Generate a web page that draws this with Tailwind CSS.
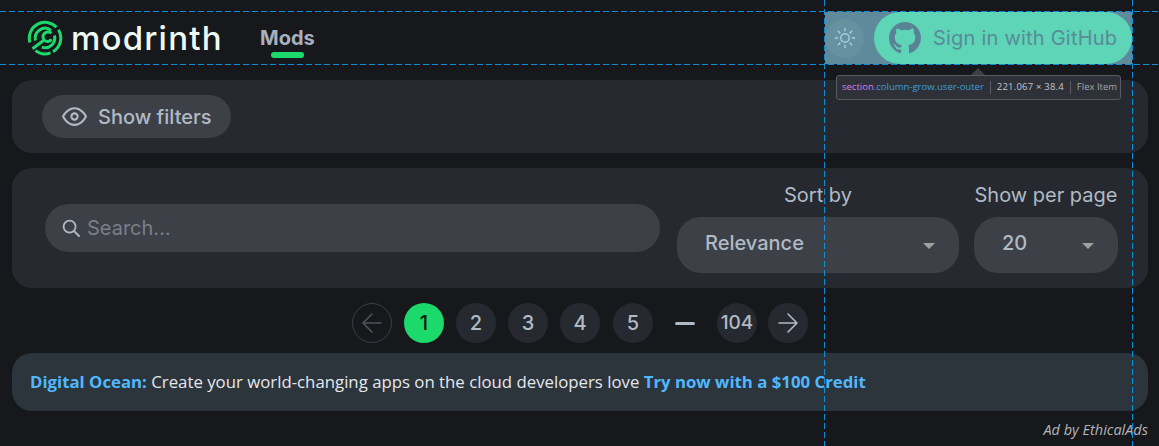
<!DOCTYPE html>
<html lang="en">
<head>
    <meta charset="UTF-8">
    <title>Modrinth</title>
    <script src="https://cdn.jsdelivr.net/npm/@tailwindcss/browser@4"></script>
</head>
<body class="relative h-[446px] w-[1159px] overflow-hidden bg-[#16181c] font-['Inter',sans-serif] text-[20px] text-[#b0bac5]">
    <!-- Header -->
    <header class="flex h-[80px] items-start pl-[27px] pr-[27px] pt-[12px]">
        <div class="flex h-[52px] items-center">
            <svg class="h-[36px] w-[36px]" viewBox="0 0 36 36" fill="none" stroke="#1bd96a" stroke-width="3" stroke-linecap="butt">
                <path d="M2.9 22.5A15.8 15.8 0 0 1 29.5 7.2"/>
                <path d="M31.5 9.8a15.8 15.8 0 0 1-5.5 21.8"/>
                <path d="M23.5 32.8A15.8 15.8 0 0 1 8.5 30.6"/>
                <path d="M8.6 20.5A9.7 9.7 0 0 1 24 10.4"/>
                <path d="M27.4 15.5a9.7 9.7 0 0 1-12.6 11.7"/>
                <path d="M5.5 28.8 16.5 20.5"/>
                <path d="M24.5 13.2a5.2 5.2 0 0 0-8.6 3.6c0 2.8 2.3 4.6 4.6 4.6 1.8 0 3.2-.8 4-2.2"/>
            </svg>
            <span class="ml-[8px] w-[149px] whitespace-nowrap text-[33px] font-medium leading-none tracking-[1.2px] text-[#edfaf4]">modrinth</span>
            <nav class="ml-[40px] h-[52px] w-[54px]">
                <div class="pt-[12px] text-[20px] font-bold leading-[28px] text-[#a8b0bc]">Mods</div>
                <div class="mx-auto h-[6px] w-[33px] rounded-full bg-[#1bd96a]"></div>
            </nav>
        </div>
        <section class="ml-auto flex h-[52px] w-[307px] items-center bg-[#5e8a9c]">
            <button class="flex h-[39px] w-[39px] items-center justify-center rounded-full bg-[#68919f]">
                <svg class="h-[22px] w-[22px]" viewBox="0 0 24 24" fill="none" stroke="#a5cfe0" stroke-width="1.6" stroke-linecap="round">
                    <circle cx="12" cy="12" r="4.6"/>
                    <path d="M12 1.5v2.5M12 20v2.5M1.5 12H4M20 12h2.5M4.6 4.6l1.8 1.8M17.6 17.6l1.8 1.8M4.6 19.4l1.8-1.8M17.6 6.4l1.8-1.8"/>
                </svg>
            </button>
            <button class="ml-[10px] flex h-[52px] w-[258px] items-center rounded-[26px] bg-[#5dd5b6] pl-[15px] text-[#5a8b98]">
                <svg class="h-[32px] w-[32px]" viewBox="0 0 16 16" fill="#5a8296"><path d="M8 0C3.58 0 0 3.58 0 8c0 3.54 2.29 6.53 5.47 7.59.4.07.55-.17.55-.38 0-.19-.01-.82-.01-1.49-2.01.37-2.53-.49-2.69-.94-.09-.23-.48-.94-.82-1.13-.28-.15-.68-.52-.01-.53.63-.01 1.08.58 1.23.82.72 1.21 1.87.87 2.33.66.07-.52.28-.87.51-1.07-1.78-.2-3.64-.89-3.64-3.95 0-.87.31-1.59.82-2.15-.08-.2-.36-1.02.08-2.12 0 0 .67-.21 2.2.82.64-.18 1.32-.27 2-.27s1.36.09 2 .27c1.53-1.04 2.2-.82 2.2-.82.44 1.1.16 1.92.08 2.12.51.56.82 1.27.82 2.15 0 3.07-1.87 3.75-3.65 3.95.29.25.54.73.54 1.48 0 1.07-.01 1.93-.01 2.2 0 .21.15.46.55.38A8.01 8.01 0 0 0 16 8c0-4.42-3.58-8-8-8z"/></svg>
                <span class="ml-[12px] whitespace-nowrap text-[20px] tracking-[0.22px]">Sign in with GitHub</span>
            </button>
        </section>
    </header>

    <main class="flex flex-col pl-[12px] pr-[11px]">
        <!-- Filters toggle -->
        <div class="flex h-[73px] items-center rounded-[20px] bg-[#26292f] pl-[30px]">
            <button class="flex h-[43px] w-[189px] items-center rounded-[22px] bg-[#3d4047] pl-[20px]">
                <svg class="h-[25px] w-[25px]" viewBox="0 0 24 24" fill="none" stroke="#b0bac5" stroke-width="2" stroke-linecap="round" stroke-linejoin="round"><path d="M1 12s4-8 11-8 11 8 11 8-4 8-11 8-11-8-11-8z"/><circle cx="12" cy="12" r="3"/></svg>
                <span class="ml-[11px] font-medium">Show filters</span>
            </button>
        </div>

        <!-- Search row -->
        <div class="mt-[15px] flex h-[120px] rounded-[20px] bg-[#26292f] pl-[33px]">
            <div class="mt-[36px] flex h-[48px] w-[615px] items-center rounded-[24px] bg-[#3d4047] pl-[17px]">
                <svg class="h-[18px] w-[18px]" viewBox="0 0 18 18" fill="none" stroke="#b0bac5" stroke-width="1.8" stroke-linecap="round"><circle cx="7.6" cy="7.6" r="6"/><path d="m12 12 5 5"/></svg>
                <span class="ml-[7px] text-[#7a7f88]">Search...</span>
            </div>
            <div class="ml-[17px] w-[282px]">
                <div class="pt-[13px] text-center leading-[28px]">Sort by</div>
                <div class="mt-[8px] flex h-[56px] items-center justify-between rounded-[24px] bg-[#3d4047] pb-[4px] pl-[28px] pr-[24px]">
                    <span class="font-medium">Relevance</span>
                    <span class="mt-[6px] h-0 w-0 border-x-[6px] border-t-[6px] border-x-transparent border-t-[#a0a0a0]"></span>
                </div>
            </div>
            <div class="ml-[15px] w-[144px]">
                <div class="whitespace-nowrap pt-[13px] text-center leading-[28px]">Show per page</div>
                <div class="mt-[8px] flex h-[56px] items-center justify-between rounded-[24px] bg-[#3d4047] pb-[4px] pl-[28px] pr-[24px]">
                    <span class="font-medium">20</span>
                    <span class="mt-[6px] h-0 w-0 border-x-[6px] border-t-[6px] border-x-transparent border-t-[#a0a0a0]"></span>
                </div>
            </div>
        </div>

        <!-- Pagination -->
        <div class="mt-[15px] flex h-[40px] items-center justify-center gap-[12px] font-medium">
            <button class="flex h-[40px] w-[40px] items-center justify-center rounded-full border border-[#3a3f45]">
                <svg class="h-[24px] w-[24px]" viewBox="0 0 24 24" fill="none" stroke="#4d5359" stroke-width="1.6" stroke-linecap="round" stroke-linejoin="round"><path d="M21 12H3M12 3l-9 9 9 9"/></svg>
            </button>
            <button class="flex h-[40px] w-[40px] items-center justify-center rounded-full bg-[#1bd96a] text-[#0b1510]">1</button>
            <button class="flex h-[40px] w-[40px] items-center justify-center rounded-full bg-[#26292f]">2</button>
            <button class="flex h-[40px] w-[40px] items-center justify-center rounded-full bg-[#26292f]">3</button>
            <button class="flex h-[40px] w-[40px] items-center justify-center rounded-full bg-[#26292f]">4</button>
            <button class="ml-[1px] flex h-[40px] w-[40px] items-center justify-center rounded-full bg-[#26292f]">5</button>
            <span class="ml-[10px] mr-[10px] h-[3px] w-[20px] rounded-full bg-[#b0bac5]"></span>
            <button class="flex h-[40px] w-[40px] items-center justify-center rounded-full bg-[#26292f] text-[19px]">104</button>
            <button class="-ml-[1px] flex h-[40px] w-[40px] items-center justify-center rounded-full bg-[#26292f]">
                <svg class="h-[24px] w-[24px]" viewBox="0 0 24 24" fill="none" stroke="#b0bac5" stroke-width="1.6" stroke-linecap="round" stroke-linejoin="round"><path d="M3 12h18M12 3l9 9-9 9"/></svg>
            </button>
        </div>

        <!-- Ad -->
        <div class="mt-[10px] flex h-[58px] items-center rounded-[20px] bg-[#2c343c] pl-[18px] font-['Open_Sans',sans-serif] text-[16.8px] text-[#e4e8ec]">
            <span><b class="font-bold text-[#4fb8ff]">Digital Ocean:</b> Create your world-changing apps on the cloud developers love <b class="font-bold text-[#4fb8ff]">Try now with a $100 Credit</b></span>
        </div>
        <div class="mt-[9px] text-right font-['Open_Sans',sans-serif] text-[14.5px] italic leading-[20px] text-[#b4b4b4]">Ad by EthicalAds</div>
    </main>

    <!-- Devtools tooltip -->
    <div class="absolute left-[836px] top-[75px] flex h-[25px] w-[285px] items-center whitespace-nowrap rounded-[3px] border border-[#585b61] bg-[#2e3138] pl-[5px] font-['Open_Sans',sans-serif] text-[9.5px] text-[#c4c7cc]">
        <span class="text-[#d77fe0]">section</span><span class="text-[#3f9ed8]">.column-grow.user-outer</span>
        <span class="mx-[6px] h-[13px] w-px bg-[#585b61]"></span>
        <span class="tracking-[0.2px]">221.067 × 38.4</span>
        <span class="mx-[6px] h-[13px] w-px bg-[#585b61]"></span>
        <span class="text-[#a3a6ab]">Flex Item</span>
    </div>
    <div class="absolute left-[971px] top-[68px] h-0 w-0 border-x-[7px] border-b-[7px] border-x-transparent border-b-[#3c4047]"></div>

    <!-- Devtools guides -->
    <svg class="pointer-events-none absolute left-0 top-0 h-[446px] w-[1159px]" viewBox="0 0 1159 446" fill="none" stroke="#0a8fd8" stroke-width="1" stroke-dasharray="6 3">
        <path d="M0 11.5H1159M0 64.5H1159M824.5 0V446M1132.5 0V446"/>
    </svg>
</body>
</html>
